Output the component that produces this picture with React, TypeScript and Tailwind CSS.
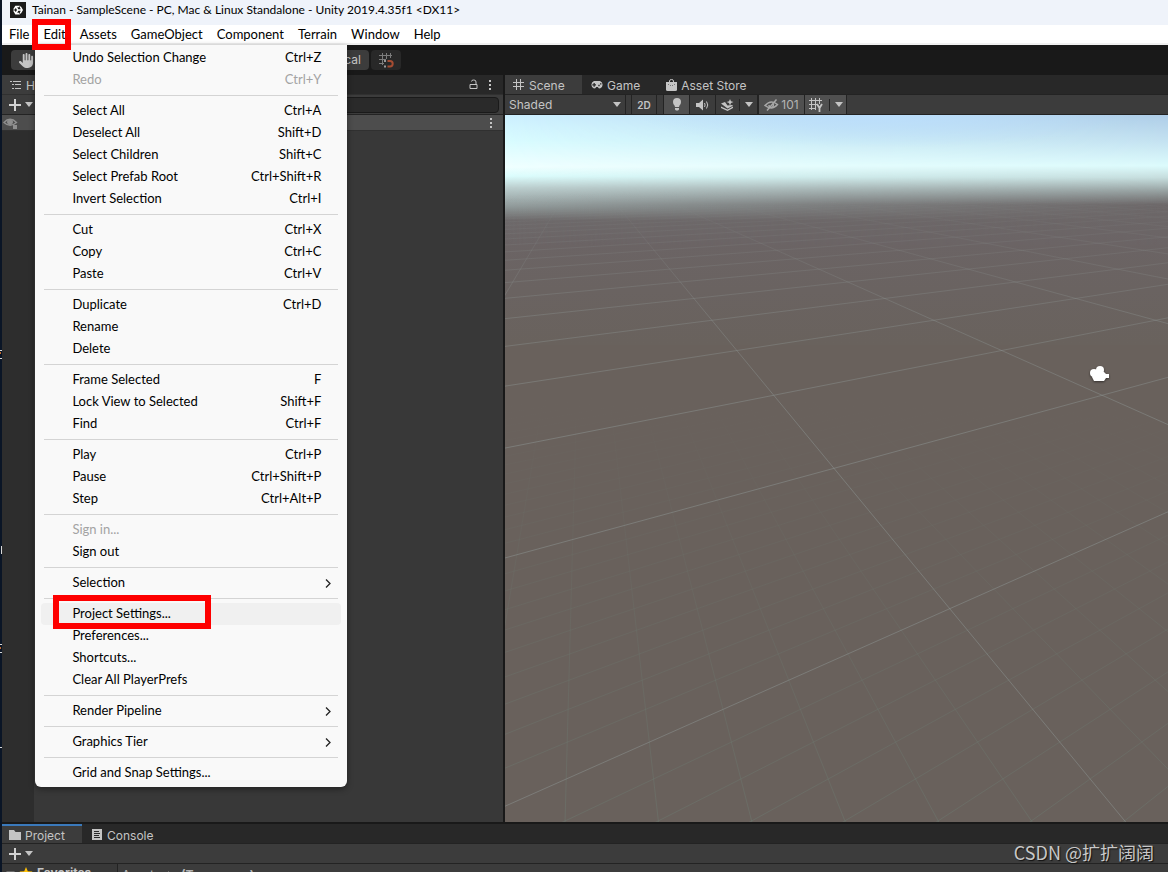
import { ReactNode } from "react"
import { FaHand, FaUnity } from "react-icons/fa6"

interface IMenuEntry {
    label: string
    keys?: string
    disabled?: boolean
    submenu?: boolean
    marked?: boolean
}

const editMenu: IMenuEntry[][] = [
    [
        { label: "Undo Selection Change", keys: "Ctrl+Z" },
        { label: "Redo", keys: "Ctrl+Y", disabled: true },
    ],
    [
        { label: "Select All", keys: "Ctrl+A" },
        { label: "Deselect All", keys: "Shift+D" },
        { label: "Select Children", keys: "Shift+C" },
        { label: "Select Prefab Root", keys: "Ctrl+Shift+R" },
        { label: "Invert Selection", keys: "Ctrl+I" },
    ],
    [
        { label: "Cut", keys: "Ctrl+X" },
        { label: "Copy", keys: "Ctrl+C" },
        { label: "Paste", keys: "Ctrl+V" },
    ],
    [{ label: "Duplicate", keys: "Ctrl+D" }, { label: "Rename" }, { label: "Delete" }],
    [
        { label: "Frame Selected", keys: "F" },
        { label: "Lock View to Selected", keys: "Shift+F" },
        { label: "Find", keys: "Ctrl+F" },
    ],
    [
        { label: "Play", keys: "Ctrl+P" },
        { label: "Pause", keys: "Ctrl+Shift+P" },
        { label: "Step", keys: "Ctrl+Alt+P" },
    ],
    [{ label: "Sign in...", disabled: true }, { label: "Sign out" }],
    [{ label: "Selection", submenu: true }],
    [
        { label: "Project Settings...", marked: true },
        { label: "Preferences..." },
        { label: "Shortcuts..." },
        { label: "Clear All PlayerPrefs" },
    ],
    [{ label: "Render Pipeline", submenu: true }],
    [{ label: "Graphics Tier", submenu: true }],
    [{ label: "Grid and Snap Settings..." }],
]

const menuBar = ["File", "Edit", "Assets", "GameObject", "Component", "Terrain", "Window", "Help"]

const Caret = () => (
    <svg width="8" height="5" className="shrink-0" fill="#c4c4c4">
        <path d="M0 0h8L4 5z" />
    </svg>
)

const Plus = () => (
    <svg width="12" height="12" className="shrink-0" stroke="#d2d2d2" strokeWidth="2">
        <path d="M6 0v12M0 6h12" />
    </svg>
)

const Dots = () => (
    <svg width="4" height="12" className="shrink-0" fill="#c4c4c4">
        <path d="M1 1h2v2H1zM1 5h2v2H1zM1 9h2v2H1z" />
    </svg>
)

const ListIcon = () => (
    <svg width="12" height="10" className="shrink-0" stroke="#c4c4c4" fill="none">
        <path d="M0 1.5h2M3 1.5h8M2 4.5h2M5 4.5h6M2 8.5h2M5 8.5h6" />
    </svg>
)

const HashIcon = () => (
    <svg width="12" height="12" className="shrink-0" stroke="#c4c4c4" fill="none">
        <path d="M3.5 0v11M7.5 0v11M0 3.5h11M0 7.5h11" />
    </svg>
)

const LockIcon = () => (
    <svg width="9" height="11" className="shrink-0" stroke="#c4c4c4" fill="none">
        <path d="M1 5.5h7v4H1zM2.5 2.5q0-1.500 2-1.500h.5q2 0 2 2v2.500" />
    </svg>
)

const GamepadIcon = () => (
    <svg width="14" height="9" className="shrink-0">
        <path
            fill="#c4c4c4"
            fillRule="evenodd"
            d="M4 1h6a4 4 0 0 1 0 7.500q-1.500 0-2.200-1.500H6.200Q5.500 8.500 4 8.500A4 4 0 0 1 4 1zM3.500 3v1.200H2.300v1.300h1.200v1.200h1.300V5.500H6V4.200H4.800V3zM10 3.200h1.400v1.400H10zM8.300 4.800h1.400v1.400H8.300z"
        />
    </svg>
)

const BagIcon = () => (
    <svg width="11" height="12" className="shrink-0">
        <path d="M0 3h11v7.500q0 1.500-1.500 1.500h-8Q0 12 0 10.500z" fill="#c4c4c4" />
        <path d="M3.500 3V2q0-1.500 2-1.500t2 1.500v1" stroke="#c4c4c4" fill="none" />
        <path d="M2 5.500h1M4 6.500h1M6 6.500h1M8 5.500h1" stroke="#777" />
    </svg>
)

const BulbIcon = () => (
    <svg width="10" height="13" fill="#c4c4c4">
        <path d="M5 0a4 4 0 0 1 4 4q0 2-1.500 3.500L7 9H3L2.500 7.500Q1 6 1 4a4 4 0 0 1 4-4zM3 10h4v1.500L6 12.500H4l-1-1z" />
    </svg>
)

const SpeakerIcon = () => (
    <svg width="14" height="12" stroke="#c4c4c4" fill="none">
        <path d="M0 4h3l4-3.500v11L3 8H0z" fill="#c4c4c4" stroke="none" />
        <path d="M8.500 4q1.200 2 0 4M10.500 2.500q2.500 3.500 0 7" />
    </svg>
)

const EffectsIcon = () => (
    <svg width="13" height="12" fill="#c4c4c4">
        <path d="M9 0l1 2.200L12.500 3l-2.500 1L9 6.500 8 4 5.500 3 8 2.200z" />
        <path d="M0 4.500l4-1.500 2.500 3.500L11 6l1 .8-5.500 2.700z" />
        <path d="M0 7.500L6.500 10.500 12 7.500v1.500L6.500 12 0 9z" />
    </svg>
)

const HiddenIcon = () => (
    <svg width="15" height="12" stroke="#a8a8a8" fill="none">
        <path d="M1 6.500Q7 0 13.500 5.500 8 12 1 6.500z" strokeWidth="1.500" />
        <path d="M5 6a2.200 2.200 0 1 0 4-1" strokeWidth="1.500" />
        <path d="M12.500.500L3 11.500" strokeWidth="1.500" />
    </svg>
)

const GridAxisIcon = () => (
    <svg width="15" height="14" stroke="#c4c4c4" fill="none">
        <path d="M2.500 0v12M6.500 0v12M10.500 0v6M0 2.500h13M0 6.500h8M0 10.500h7" />
        <path d="M8 6l2.500 4L13 6M10.500 10v4" strokeWidth="1.800" />
    </svg>
)

const SnapIcon = () => (
    <svg width="15" height="15" fill="none">
        <path d="M3.500 0v12M7.500 0v6M11.500 0v5M0 2.500h13M0 6.500h7M0 10.500h5" stroke="#7c7c7c" />
        <path d="M8.500 8h2.500a2.700 2.700 0 0 1 0 5.400H8.500" stroke="#a54c32" strokeWidth="2" />
        <path d="M5 7h2v2H5zM5 12.400h2v2H5z" fill="#9a9a9a" />
    </svg>
)

const FolderIcon = () => (
    <svg width="12" height="10" className="shrink-0" fill="#c4c4c4">
        <path d="M0 0h5l1.500 2H12v8H0z" />
    </svg>
)

const ConsoleIcon = () => (
    <svg width="10" height="11" className="shrink-0">
        <path d="M0 0h10v11H0z" fill="#c4c4c4" />
        <path d="M2 2.500h5M2 4.500h6M2 6.500h5M2 8.500h6" stroke="#282828" />
    </svg>
)

const EyeIcon = () => (
    <svg width="15" height="12" className="shrink-0" stroke="#8f8f8f" fill="none">
        <path d="M1 5.500Q7 -1 13.500 5.500 7 11 1 5.500z" strokeWidth="1.400" />
        <circle cx="7" cy="5" r="2.500" fill="#8f8f8f" />
        <path d="M10 8h4v4h-4z" fill="#8f8f8f" stroke="none" />
    </svg>
)

const EditMenu = () => (
    <div
        role="menu"
        className="absolute -left-px top-full z-10 w-[312px] rounded-b-md bg-[#f9f9f9] pt-[2px] pb-[3px] text-black shadow-[0_2px_6px_rgba(0,0,0,0.4)]"
    >
        {editMenu.map((group, i) => (
            <div key={i}>
                {i > 0 && <hr className="mx-[9px] my-1 border-t border-[#d4d4d4]" />}
                {group.map((entry) => (
                    <div key={entry.label} className="relative mx-[6px]">
                        <button
                            role="menuitem"
                            disabled={entry.disabled}
                            className={`flex h-[22px] w-full items-center justify-between rounded-sm pb-[2px] pl-[31px] pr-5 disabled:text-[#a3a3a3] ${
                                entry.marked ? "bg-[#f0f0f0]" : ""
                            }`}
                        >
                            <span>{entry.label}</span>
                            {entry.keys && <span>{entry.keys}</span>}
                            {entry.submenu && (
                                <svg width="6" height="9" className="-mr-2.5 mt-[2px]" stroke="#222" strokeWidth="1.3" fill="none">
                                    <path d="M1 .5l4 4-4 4" />
                                </svg>
                            )}
                        </button>
                        {entry.marked && (
                            <div className="pointer-events-none absolute -top-2 left-3 h-[34px] w-[158px] border-[6px] border-[#fe0000]" />
                        )}
                    </div>
                ))}
            </div>
        ))}
    </div>
)

// ground grid in one point perspective, all lines run to the horizon
const HORIZON = 49
const VP_X = 78
const CROSS_X = 1446
const BOTTOM = 1400

const lineAcross = (n: number) => {
    const d = 1 / (0.0022487 + 0.0010375 * n)
    const x = VP_X + 0.8247 * d
    const slope = -d / (CROSS_X - x)
    return `M-20 ${(HORIZON + slope * (-20 - CROSS_X)).toFixed(1)}L${CROSS_X} ${HORIZON}`
}

const lineAway = (i: number) => {
    const slope = 0.8247 + 1.42 * i
    return `M${VP_X} ${HORIZON}L${(VP_X + slope * (BOTTOM - HORIZON)).toFixed(1)} ${BOTTOM}`
}

const range = (from: number, to: number) => Array.from({ length: to - from + 1 }, (_, i) => from + i)

const majorGrid = [...range(0, 30).map(lineAcross), ...range(-3, 12).map(lineAway)].join("")
const minorGrid = [
    ...range(-16, 35).filter((n) => n % 10).map((n) => lineAcross(n / 10)),
    ...range(-14, 40).filter((n) => n % 10).map((n) => lineAway(n / 10)),
].join("")

const Viewport = () => (
    <div className="relative min-h-0 flex-1 overflow-hidden bg-[#69615c]">
        <svg className="absolute inset-0 h-full w-full" fill="none">
            <defs>
                <linearGradient id="skyLeft" gradientUnits="userSpaceOnUse" x1="0" y1="0" x2="0" y2="130">
                    <stop offset="0" stopColor="#cdf0ff" />
                    <stop offset="0.2" stopColor="#d9fcff" />
                    <stop offset="0.4" stopColor="#f0ffff" />
                    <stop offset="0.47" stopColor="#dcfdfd" />
                    <stop offset="0.56" stopColor="#bccfcf" />
                    <stop offset="0.7" stopColor="#929c9c" />
                    <stop offset="0.81" stopColor="#6e6a6b" />
                    <stop offset="1" stopColor="#6b6465" />
                </linearGradient>
                <linearGradient id="skyRight" gradientUnits="userSpaceOnUse" x1="0" y1="0" x2="0" y2="130">
                    <stop offset="0" stopColor="#aecde8" />
                    <stop offset="0.2" stopColor="#c4e2f1" />
                    <stop offset="0.39" stopColor="#dcfbfc" />
                    <stop offset="0.48" stopColor="#c6dede" />
                    <stop offset="0.58" stopColor="#98a3a3" />
                    <stop offset="0.69" stopColor="#6c6768" />
                    <stop offset="1" stopColor="#6b6465" />
                </linearGradient>
                <linearGradient id="blend">
                    <stop offset="0" stopColor="#000" />
                    <stop offset="0.5" stopColor="#999" />
                    <stop offset="1" stopColor="#fff" />
                </linearGradient>
                <linearGradient id="ground" gradientUnits="userSpaceOnUse" x1="0" y1="120" x2="0" y2="230">
                    <stop offset="0" stopColor="#6b6465" />
                    <stop offset="1" stopColor="#69625d" />
                </linearGradient>
                <radialGradient id="blue" gradientUnits="userSpaceOnUse" cx="380" cy="0" r="250" gradientTransform="matrix(1 0 0 0.13 0 0)">
                    <stop offset="0" stopColor="#bcdffd" stopOpacity="0.9" />
                    <stop offset="1" stopColor="#bcdffd" stopOpacity="0" />
                </radialGradient>
                <linearGradient id="major" gradientUnits="userSpaceOnUse" x1="0" y1="75" x2="0" y2="320">
                    <stop offset="0" stopColor="#8d9593" stopOpacity="0" />
                    <stop offset="0.5" stopColor="#8d9593" stopOpacity="0.35" />
                    <stop offset="1" stopColor="#8d9593" stopOpacity="0.5" />
                </linearGradient>
                <linearGradient id="minor" gradientUnits="userSpaceOnUse" x1="0" y1="280" x2="0" y2="707">
                    <stop offset="0" stopColor="#6c786f" stopOpacity="0" />
                    <stop offset="1" stopColor="#6c786f" stopOpacity="0.5" />
                </linearGradient>
                <mask id="rightSide">
                    <rect width="100%" height="130" fill="url(#blend)" />
                </mask>
            </defs>
            <rect y="120" width="100%" height="110" fill="url(#ground)" />
            <rect width="100%" height="130" fill="url(#skyLeft)" />
            <rect width="100%" height="130" fill="url(#skyRight)" mask="url(#rightSide)" />
            <rect width="100%" height="50" fill="url(#blue)" />
            <path d={minorGrid} stroke="url(#minor)" />
            <path d={majorGrid} stroke="url(#major)" />
            {/* camera gizmo */}
            <g fill="#fff" className="drop-shadow-[0_1px_1px_rgba(0,0,0,0.5)]">
                <circle cx="589" cy="258" r="4" />
                <circle cx="595" cy="255" r="4" />
                <path d="M589 257h10l2 2h3v4h-3l-2 3h-10l-2-4z" />
            </g>
        </svg>
    </div>
)

interface ITabProps {
    icon: ReactNode
    label: string
    active?: boolean
    className?: string
}

const Tab = ({ icon, label, active, className }: ITabProps) => (
    <button className={`flex h-full items-center ${active ? "bg-[#3c3c3c]" : ""} ${className}`}>
        {icon}
        <span className="pt-[2px]">{label}</span>
    </button>
)

const tool = "flex h-full items-center justify-center border-r border-[#232323]"

const Hierarchy = () => (
    <section className="flex w-[501px] shrink-0 flex-col bg-[#383838]">
        <div className="flex h-[19px] items-center bg-[#282828] pr-[11px]">
            <Tab icon={<ListIcon />} label="Hierarchy" active className="gap-1 px-2" />
            <div className="ml-auto flex items-center gap-2.5">
                <LockIcon />
                <Dots />
            </div>
        </div>
        <div className="flex h-5 items-center gap-1 border-t border-[#303030] bg-[#3c3c3c] pl-[7px] pr-1">
            <button aria-label="Create" className="flex items-center gap-1">
                <Plus />
                <Caret />
            </button>
            <input
                aria-label="Search"
                className="ml-2 h-4 min-w-0 flex-1 rounded border border-[#1a1a1a] bg-[#2a2a2a] outline-none"
            />
        </div>
        <div className="relative flex min-h-0 flex-1 flex-col border-t border-[#232323]">
            <div className="flex h-4 items-center justify-between border-b border-[#303030] bg-[#4d4d4d] pl-[1px] pr-[10px]">
                <EyeIcon />
                <Dots />
            </div>
            <div className="w-8 flex-1 bg-[#2d2d2d]" />
        </div>
    </section>
)

const Scene = () => (
    <section className="flex min-w-0 flex-1 flex-col">
        <div className="flex h-[19px] bg-[#282828]">
            <Tab icon={<HashIcon />} label="Scene" active className="w-[77px] gap-1 pl-2" />
            <Tab icon={<GamepadIcon />} label="Game" className="gap-[3px] pl-2" />
            <Tab icon={<BagIcon />} label="Asset Store" className="gap-1 pl-[26px]" />
        </div>
        <div className="flex h-[21px] border-y border-[#232323] bg-[#3c3c3c]">
            <div className="relative w-[121px] border-r border-[#232323]">
                <select aria-label="Draw mode" className="h-full w-full appearance-none bg-transparent pl-1 outline-none">
                    <option>Shaded</option>
                </select>
                <div className="pointer-events-none absolute inset-y-0 right-1 flex items-center">
                    <Caret />
                </div>
            </div>
            <button className={`${tool} ml-[5px] w-[26px] border-l text-[10px] font-semibold`}>2D</button>
            <button aria-label="Lighting" className={`${tool} ml-[6px] w-[27px] border-l bg-[#505050]`}>
                <BulbIcon />
            </button>
            <button aria-label="Audio" className={`${tool} w-[26px]`}>
                <SpeakerIcon />
            </button>
            <button aria-label="Effects" className={`${tool} w-[43px] gap-[5px] border-r-2`}>
                <EffectsIcon />
                <span className="h-3 w-px bg-[#232323]" />
                <Caret />
            </button>
            <button aria-label="Hidden objects" className={`${tool} w-[46px] gap-[2px] bg-[#505050] text-[#b4b4b4]`}>
                <HiddenIcon />
                101
            </button>
            <button aria-label="Grid" className={`${tool} w-[42px] gap-[5px] bg-[#505050]`}>
                <GridAxisIcon />
                <span className="h-3 w-px bg-[#232323]" />
                <Caret />
            </button>
        </div>
        <Viewport />
    </section>
)

const ProjectPanel = () => (
    <section className="relative h-[50px] shrink-0 overflow-hidden bg-[#383838]">
        <div className="h-[2px] bg-[#191919]" />
        <div className="flex h-[19px] bg-[#282828]">
            <Tab
                icon={<FolderIcon />}
                label="Project"
                active
                className="w-20 gap-1 border-t-2 border-[#3a79bb] pl-[7px]"
            />
            <Tab
                icon={<ConsoleIcon />}
                label="Console"
                className="gap-[5px] border-t-2 border-transparent pl-[10px]"
            />
        </div>
        <div className="flex h-[21px] items-center border-y border-[#232323] bg-[#3c3c3c] pl-[7px]">
            <button aria-label="Create asset" className="flex items-center gap-1">
                <Plus />
                <Caret />
            </button>
        </div>
        <div className="flex h-[18px] bg-[#3c3c3c]">
            <div className="flex w-[116px] items-center gap-1 border-r border-[#232323] bg-[#383838] pl-1 font-bold">
                <svg width="9" height="5" fill="#6a6a6a">
                    <path d="M0 0h9L4.500 5z" />
                </svg>
                <svg width="14" height="14" fill="#ffc107">
                    <path d="M7 1l1.800 4.200 4.700.3-3.600 3 1.200 4.500L7 10.500 2.900 13l1.200-4.500-3.600-3 4.700-.3z" />
                </svg>
                Favorites
            </div>
            <div className="flex items-center gap-2 pl-1 pt-1 text-[#b4b4b4]">
                Assets
                <svg width="5" height="8" fill="#8c8c8c">
                    <path d="M0 0l5 4-5 4z" />
                </svg>
                <b>(Temporary)</b>
            </div>
        </div>
        <div className="absolute right-[14px] top-[18px] font-['Noto_Sans_CJK_SC',sans-serif] text-[18px] leading-6 text-[#c8c8c8] [text-shadow:1px_1px_1px_#111]">
            CSDN @扩扩阔阔
        </div>
    </section>
)

export default function App() {
    return (
        <div className="flex h-screen overflow-hidden bg-[#191919] font-['Inter',sans-serif] text-[12px] leading-4 text-[#c4c4c4]">
            {/* sliver of the window behind */}
            <svg width="2" className="h-full shrink-0 bg-[#0a1526]">
                <path d="M0 350h2v1H0zM0 358h2v1H0zM1 546h1v8H1zM0 644h2v1H0zM0 652h2v1H0zM0 747h2v1H0z" fill="#d8d8d8" />
                <path d="M0 352h1v2H0zM0 647h1v2H0z" fill="#c46a2a" />
            </svg>
            <div className="flex min-w-0 flex-1 flex-col">
                <header className="font-['Lato',sans-serif] text-black">
                    <div className="flex h-[25px] items-center gap-[6px] bg-[#eff3fa] pb-[6px] pl-2">
                        <span className="flex h-4 w-4 items-center justify-center bg-[#1b1b1b] text-white">
                            <FaUnity size={10} className="-rotate-90" />
                        </span>
                        <h1>Tainan - SampleScene - PC, Mac &amp; Linux Standalone - Unity 2019.4.35f1 &lt;DX11&gt;</h1>
                    </div>
                    <nav className="flex h-5 border-b-2 border-[#f0f0f0] bg-white text-[13px]">
                        {menuBar.map((name) => (
                            <div key={name} className="relative h-5">
                                <button className="h-full px-[7px] pb-[2px]">{name}</button>
                                {name === "Edit" && (
                                    <>
                                        <EditMenu />
                                        <div className="pointer-events-none absolute -left-1 -top-[6px] z-20 h-[31px] w-[39px] border-[6px] border-[#fe0000]" />
                                    </>
                                )}
                            </div>
                        ))}
                    </nav>
                </header>
                <div className="flex h-[30px] shrink-0 items-center gap-[2px] pl-[9px]">
                    <button aria-label="Hand tool" className="flex h-5 w-[31px] items-center justify-center rounded-sm bg-[#3c3c3c]">
                        <FaHand size={15} />
                    </button>
                    <button className="ml-[230px] h-5 w-[95px] rounded-sm bg-[#3c3c3c] pr-2 text-right">Local</button>
                    <button aria-label="Snap" className="flex h-5 w-[30px] items-center justify-center rounded-sm bg-[#282828]">
                        <SnapIcon />
                    </button>
                </div>
                <main className="flex min-h-0 flex-1 gap-[2px]">
                    <Hierarchy />
                    <Scene />
                </main>
                <ProjectPanel />
            </div>
        </div>
    )
}
